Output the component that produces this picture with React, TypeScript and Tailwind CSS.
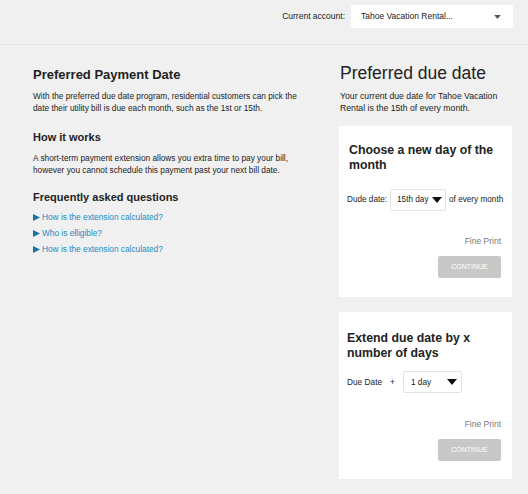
import React from 'react';

const faqs = [
  'How is the extension calculated?',
  'Who is elligible?',
  'How is the extension calculated?',
];

const Caret: React.FC<{ className?: string }> = ({ className }) => (
  <svg viewBox="0 0 10 6" className={className}>
    <path d="M0 0h10L5 6z" fill="currentColor" />
  </svg>
);

const Select: React.FC<{ value: string; className?: string }> = ({ value, className }) => (
  <div
    className={`flex shrink-0 items-center justify-between bg-white border border-[#e2e2e2] rounded-[2px] ${className ?? ''}`}
  >
    <span>{value}</span>
    <Caret className="w-[10px] h-[6px] text-[#111]" />
  </div>
);

const Card: React.FC<{
  title: React.ReactNode;
  className?: string;
  titleClass?: string;
  footClass?: string;
  children: React.ReactNode;
}> = ({ title, className, titleClass, footClass, children }) => (
  <div className={`bg-white px-[8px] ${className ?? ''}`}>
    <h3 className={`text-[12.3px] leading-[15px] font-bold text-[#222] ${titleClass ?? ''}`}>{title}</h3>
    {children}
    <div className={`flex flex-col items-end pr-[3px] ${footClass ?? ''}`}>
      <span className="text-[8.5px] leading-[12px] text-[#777]">Fine Print</span>
      <button className="mt-[9px] w-[63px] h-[22px] rounded-[2px] bg-[#c8c8c8] text-white text-[7px] uppercase">
        Continue
      </button>
    </div>
  </div>
);

const App: React.FC = () => {
  return (
    <div
      className="min-h-screen w-[528px] bg-[#f0f0f0] text-[#222]"
      style={{ fontFamily: '"Liberation Sans", Arial, sans-serif' }}
    >
      {/* Header */}
      <div className="h-[45px] border-b border-[#e2e2e2] flex justify-end items-start pt-[5px] pr-[15px]">
        <span className="text-[8.5px] leading-[23px] mr-[6px]">Current account:</span>
        <div className="w-[162px] h-[23px] bg-white rounded-[2px] flex items-center justify-between pl-[10px] pr-[12px]">
          <span className="text-[8.5px]">Tahoe Vacation Rental...</span>
          <Caret className="w-[7px] h-[4px] text-[#555]" />
        </div>
      </div>

      <div className="flex">
        {/* Left column */}
        <div className="w-[306px] pl-[33px] pt-[22px]">
          <h2 className="text-[13px] leading-[16px] font-bold">Preferred Payment Date</h2>
          <p className="mt-[7px] text-[8.3px] leading-[12px]">
            With the preferred due date program, residential customers can pick the date their utility bill is due
            each month, such as the 1st or 15th.
          </p>
          <h3 className="mt-[16px] text-[11px] leading-[14px] font-bold">How it works</h3>
          <p className="mt-[8px] text-[8.3px] leading-[12px]">
            A short-term payment extension allows you extra time to pay your bill, however you cannot schedule this
            payment past your next bill date.
          </p>
          <h3 className="mt-[14px] text-[11px] leading-[14px] font-bold">Frequently asked questions</h3>
          <ul className="mt-[5px]">
            {faqs.map((q, i) => (
              <li key={i} className="flex items-center h-[16px] text-[8.3px] text-[#1a8cc2]">
                <svg viewBox="0 0 7 7" className="w-[7px] h-[7px] mr-[2px] text-[#1673a8]">
                  <path d="M0 0l7 3.5L0 7z" fill="currentColor" />
                </svg>
                {q}
              </li>
            ))}
          </ul>
        </div>

        {/* Right column */}
        <div className="w-[173px] ml-[33px] pt-[17px]">
          <h1 className="text-[17.5px] leading-[22px] font-normal pl-[1px]">Preferred due date</h1>
          <p className="mt-[6px] text-[8.7px] leading-[12px] pl-[1px]">
            Your current due date for Tahoe Vacation Rental is the 15th of every month.
          </p>

          <div className="mt-[12px]">
            <Card
              title={<>Choose a new day of the month</>}
              className="pt-[17px] pb-[19px]"
              titleClass="pl-[2px]"
              footClass="mt-[24px]"
            >
              <div className="mt-[16px] flex items-center whitespace-nowrap text-[8.2px]">
                <span>Dude date:</span>
                <Select value="15th day" className="ml-[3px] w-[56px] h-[22px] pl-[6px] pr-[3px]" />
                <span className="ml-[3px]">of every month</span>
              </div>
            </Card>
          </div>

          <div className="mt-[15px]">
            <Card
              title={<>Extend due date by x number of days</>}
              className="pt-[19px] pb-[18px]"
              footClass="mt-[25px]"
            >
              <div className="mt-[10px] flex items-center whitespace-nowrap text-[8.3px]">
                <span>Due Date</span>
                <span className="ml-[8px]">+</span>
                <Select value="1 day" className="ml-[8px] w-[59px] h-[22px] pl-[7px] pr-[4px]" />
              </div>
            </Card>
          </div>
        </div>
      </div>
    </div>
  );
};

export default App;
